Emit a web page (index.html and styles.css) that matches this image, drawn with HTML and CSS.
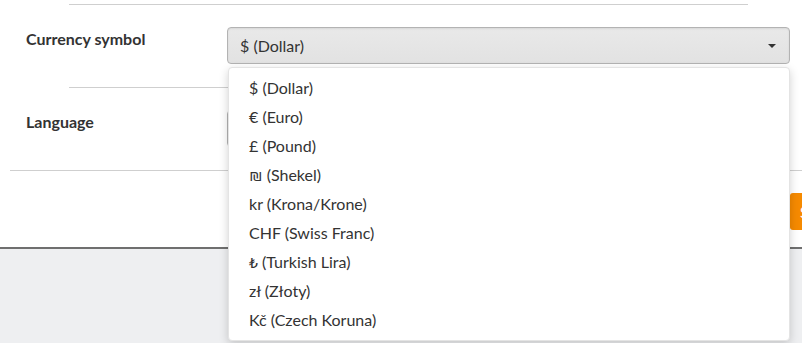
FILE: index.html
```html
<!DOCTYPE html>
<html>
<head>
    <title>Settings</title>
    <link rel="stylesheet" href="styles.css">
</head>
<body>
    <div class="panel">
        <div class="divider"></div>
        <div class="form-row">
            <label class="form-label">Currency symbol</label>
            <div class="select open">
                <span>$ (Dollar)</span>
                <span class="caret"></span>
            </div>
        </div>
        <div class="divider"></div>
        <div class="form-row">
            <label class="form-label">Language</label>
            <div class="select">
                <span></span>
                <span class="caret"></span>
            </div>
        </div>
        <div class="panel-footer">
            <button class="btn-primary">Save</button>
        </div>

        <ul class="dropdown">
            <li>$ (Dollar)</li>
            <li>€ (Euro)</li>
            <li>£ (Pound)</li>
            <li>₪ (Shekel)</li>
            <li>kr (Krona/Krone)</li>
            <li>CHF (Swiss Franc)</li>
            <li><span class="sym">₺</span> (Turkish Lira)</li>
            <li>zł (Złoty)</li>
            <li>Kč (Czech Koruna)</li>
        </ul>
    </div>
</body>
</html>
```

FILE: styles.css
```css
html, body {
    margin: 0;
    height: 100%;
    overflow: hidden;
}

body {
    font-family: Lato, "Open Sans", sans-serif;
    font-size: 16px;
    color: #333;
    background-color: #eeeff1;
}

.panel {
    position: relative; /* anchor for the open dropdown */
    width: 880px;
    height: 249px;
    padding-top: 4px;
    box-sizing: border-box;
    background-color: #fff;
    border-bottom: 2px solid #6f6f6f;
}

.divider {
    width: 679px;
    margin-left: 69px;
    border-top: 1px solid #cfcfcf;
}

.form-row {
    display: flex;
    align-items: flex-start;
    padding: 22px 0 23px 26px;
}

.form-label {
    width: 201px;
    padding-top: 2px;
    font-weight: bold;
    line-height: 20px;
}

.select {
    width: 537px;
    height: 35px;
    display: flex;
    align-items: center;
    justify-content: space-between;
    padding: 0 12px;
    background: linear-gradient(#e9e9e9, #e2e2e2);
    border: 1px solid #b3b3b3;
    border-radius: 4px;
    box-shadow: inset 0 1px 2px rgba(0, 0, 0, 0.08);
}

.caret {
    width: 0;
    height: 0;
    margin-right: 1px;
    border-left: 4px solid transparent;
    border-right: 4px solid transparent;
    border-top: 4px solid #333;
}

.panel-footer {
    display: flex;
    justify-content: flex-end;
    padding: 22px 0 0;
    margin-left: 10px;
    border-top: 1px solid #cfcfcf;
}

.btn-primary {
    width: 90px;
    height: 37px;
    background-color: #f68a00;
    color: #fff;
    border: none;
    border-radius: 3px;
    font-family: inherit;
    font-size: 15px;
    text-align: left;
    padding-left: 10px;
}

.dropdown {
    position: absolute;
    top: 67px;
    left: 228px;
    width: 562px;
    margin: 0;
    padding: 5px 0 6px;
    list-style: none;
    background-color: #fff;
    border: 1px solid #e4e4e4;
    border-radius: 4px;
    box-sizing: border-box;
    box-shadow: 0 3px 10px rgba(0, 0, 0, 0.18);
    z-index: 10;
}

.dropdown li {
    height: 29px;
    line-height: 29px;
    padding-left: 20px;
}

.dropdown .sym {
    font-family: "DejaVu Sans", sans-serif;
    font-size: 14px;
}
```
